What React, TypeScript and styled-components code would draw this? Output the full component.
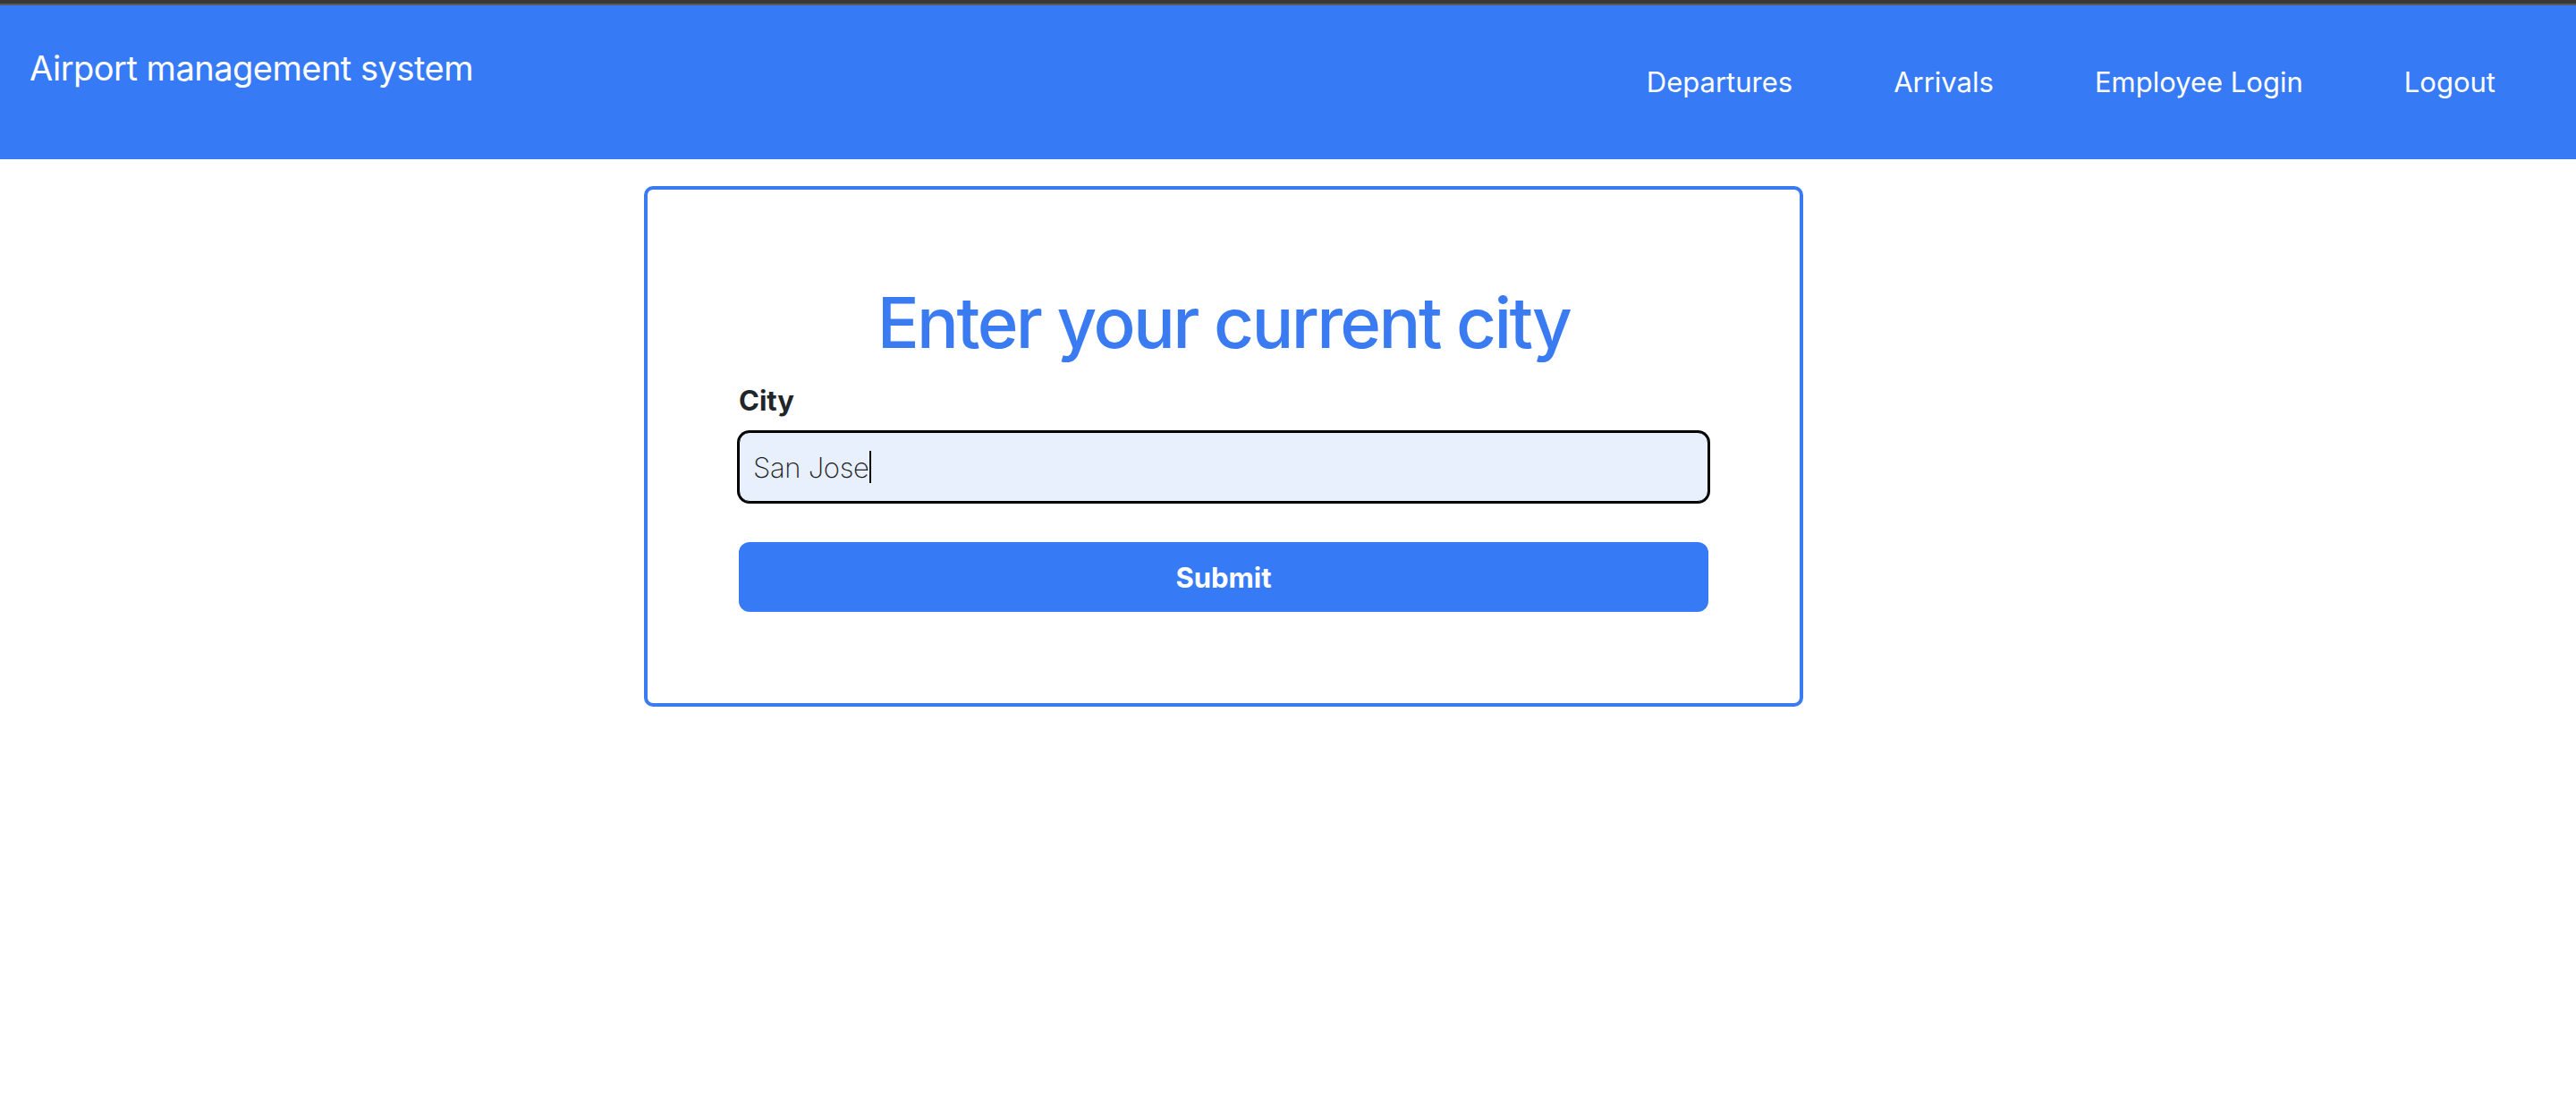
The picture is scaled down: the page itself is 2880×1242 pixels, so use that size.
import { useEffect, useRef, useState } from "react";
import styled, { createGlobalStyle } from "styled-components";

const GlobalStyle = createGlobalStyle`
  html, body {
    margin: 0;
    padding: 0;
    background: #ffffff;
  }
  body {
    font-family: Inter, "Noto Sans", "Liberation Sans", sans-serif;
    color: #212529;
  }
  * {
    box-sizing: border-box;
  }
`;

const navLinks = ["Departures", "Arrivals", "Employee Login", "Logout"];

const App: React.FC = () => {
  const [city, setCity] = useState("San Jose");
  const inputRef = useRef<HTMLInputElement>(null);

  useEffect(() => {
    const el = inputRef.current;
    if (el) {
      el.focus();
      el.setSelectionRange(el.value.length, el.value.length);
    }
  }, []);

  return (
    <>
      <GlobalStyle />
      <SWindowStrip />
      <SNavbar>
        <SBrand>Airport management system</SBrand>
        <SNavList>
          {navLinks.map((link) => (
            <SNavLink key={link} href="#">
              {link}
            </SNavLink>
          ))}
        </SNavList>
      </SNavbar>
      <SCard>
        <SHeading>Enter your current city</SHeading>
        <SForm onSubmit={(e) => e.preventDefault()}>
          <SLabel htmlFor="city">City</SLabel>
          <SInputWrap>
            <SInput
              id="city"
              ref={inputRef}
              value={city}
              onChange={(e) => setCity(e.target.value)}
            />
            {/* caret drawn over the field, headless screenshots drop the real one */}
            <SCaret aria-hidden="true">{city}</SCaret>
          </SInputWrap>
          <SButton type="submit">Submit</SButton>
        </SForm>
      </SCard>
    </>
  );
};

export default App;

const SWindowStrip = styled.div`
  height: 6px;
  background: #383838;
  border-bottom: 2px solid #5a5a5a;
`;

const SNavbar = styled.header`
  display: flex;
  justify-content: space-between;
  align-items: flex-start;
  height: 172px;
  background: #377af6;
  color: #ffffff;
`;

const SBrand = styled.div`
  padding: 46px 0 0 33px;
  font-size: 38px;
  line-height: 48px;
  font-weight: 400;
  letter-spacing: -0.5px;
`;

const SNavList = styled.nav`
  display: flex;
  align-self: center;
  gap: 113px;
  padding-right: 90px;
`;

const SNavLink = styled.a`
  color: #ffffff;
  text-decoration: none;
  font-size: 31px;
  line-height: 40px;
  font-weight: 400;
`;

const SCard = styled.main`
  width: 45%;
  margin: 30px 0 0 25%;
  padding: 101px 102px 102px;
  border: 4px solid #3a7bf2;
  border-radius: 10px;
`;

const SHeading = styled.h1`
  margin: 0;
  text-align: center;
  color: #3a7bf2;
  font-size: 78px;
  line-height: 96px;
  font-weight: 500;
  letter-spacing: -2.6px;
`;

const SForm = styled.form`
  display: flex;
  flex-direction: column;
  margin-top: 15px;
`;

const SLabel = styled.label`
  margin-bottom: 11px;
  font-size: 31px;
  line-height: 48px;
  font-weight: 700;
  color: #212529;
`;

const SInputWrap = styled.div`
  position: relative;
  display: flex;
`;

const SInput = styled.input`
  flex: 1;
  height: 78px;
  padding: 0 15px;
  border: 1px solid #000000;
  border-radius: 12px;
  box-shadow: 0 0 0 2px #000000;
  outline: none;
  background: #e8f0fe;
  font-family: Inter, "Noto Sans", sans-serif;
  font-size: 31px;
  font-weight: 200;
  letter-spacing: -0.3px;
  color: #1d1d1f;
  caret-color: transparent;
`;

const SCaret = styled.span`
  position: absolute;
  left: 16px;
  top: 21px;
  height: 36px;
  border-right: 2px solid #000000;
  color: transparent;
  font-size: 31px;
  font-weight: 200;
  letter-spacing: -0.3px;
  line-height: 36px;
  white-space: pre;
  pointer-events: none;
`;

const SButton = styled.button`
  height: 78px;
  margin-top: 45px;
  border: none;
  border-radius: 12px;
  background: #377af6;
  color: #ffffff;
  font-family: Inter, "Noto Sans", sans-serif;
  font-size: 31px;
  font-weight: 700;
  cursor: pointer;
`;
